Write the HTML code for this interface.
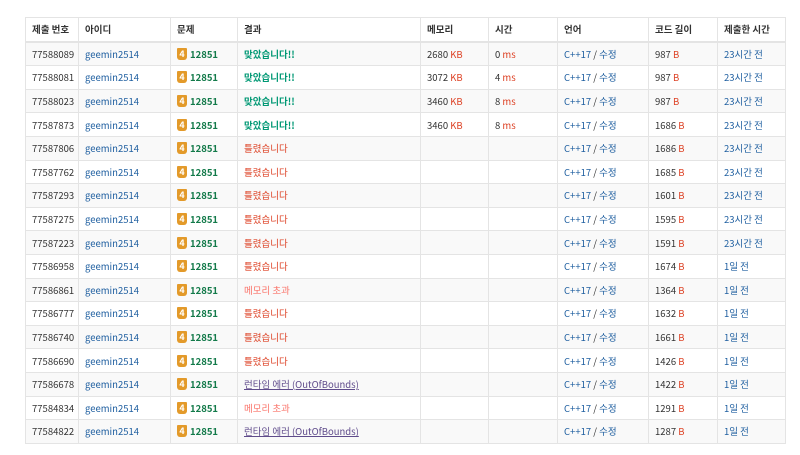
<!DOCTYPE html>
<html><head><meta charset="utf-8"><style>
body{margin:0;background:#fff;width:800px;height:455px;overflow:hidden;font-family:"Noto Sans CJK KR","Liberation Sans",sans-serif;font-size:9.5px;color:#333}
table{position:absolute;left:25px;top:17px;border-collapse:collapse;table-layout:fixed;width:760px}
td,th{border:1px solid #e4e4e4;height:22.6px;padding:0 0 0 6px;text-align:left;white-space:nowrap;overflow:hidden;line-height:14px;vertical-align:middle}
th{font-weight:bold;color:#333;border-bottom:2px solid #e4e4e4}
tbody tr:nth-child(odd){background:#f9f9f9}
.l{color:#1f5fa0}
.ac{color:#009874;font-weight:bold}
.wa{color:#dd4124}
.me{color:#fa7268}
.re{color:#5f4b8b;text-decoration:underline}
.r{color:#dd4124}
.f{display:flex;align-items:center}
.p{color:#137a4a;font-weight:bold}
.b{display:block;width:10px;height:12px;background:#e39a2a;color:#fff;font-size:9px;font-weight:bold;text-align:center;line-height:12px;margin-right:3px;border-radius:1px 1px 3px 3px}
</style></head><body>
<table>
<colgroup><col style="width:53px"><col style="width:92px"><col style="width:67px"><col style="width:183px"><col style="width:68px"><col style="width:69px"><col style="width:91px"><col style="width:69px"><col style="width:68px"></colgroup>
<thead><tr><th>제출 번호</th><th>아이디</th><th>문제</th><th>결과</th><th>메모리</th><th>시간</th><th>언어</th><th>코드 길이</th><th>제출한 시간</th></tr></thead>
<tbody id="tb"></tbody>
</table>
<script>
var rows=[
["77588089","ac","2680","0","987","23시간 전"],
["77588081","ac","3072","4","987","23시간 전"],
["77588023","ac","3460","8","987","23시간 전"],
["77587873","ac","3460","8","1686","23시간 전"],
["77587806","wa","","","1686","23시간 전"],
["77587762","wa","","","1685","23시간 전"],
["77587293","wa","","","1601","23시간 전"],
["77587275","wa","","","1595","23시간 전"],
["77587223","wa","","","1591","23시간 전"],
["77586958","wa","","","1674","1일 전"],
["77586861","me","","","1364","1일 전"],
["77586777","wa","","","1632","1일 전"],
["77586740","wa","","","1661","1일 전"],
["77586690","wa","","","1426","1일 전"],
["77586678","re","","","1422","1일 전"],
["77584834","me","","","1291","1일 전"],
["77584822","re","","","1287","1일 전"]];
var t={ac:"맞았습니다!!",wa:"틀렸습니다",me:"메모리 초과",re:"런타임 에러 (OutOfBounds)"};
var h="";
rows.forEach(function(r){
h+="<tr><td>"+r[0]+"</td><td class=l>geemin2514</td><td><div class=f><span class=b>4</span><span class=p>12851</span></div></td><td><span class="+r[1]+">"+t[r[1]]+"</span></td><td>"+(r[2]?r[2]+" <span class=r>KB</span>":"")+"</td><td>"+(r[3]?r[3]+" <span class=r>ms</span>":"")+"</td><td class=l>C++17 <span style='color:#333'>/</span> 수정</td><td>"+r[4]+" <span class=r>B</span></td><td class=l>"+r[5]+"</td></tr>";});
document.getElementById("tb").innerHTML=h;
</script>
</body></html>
